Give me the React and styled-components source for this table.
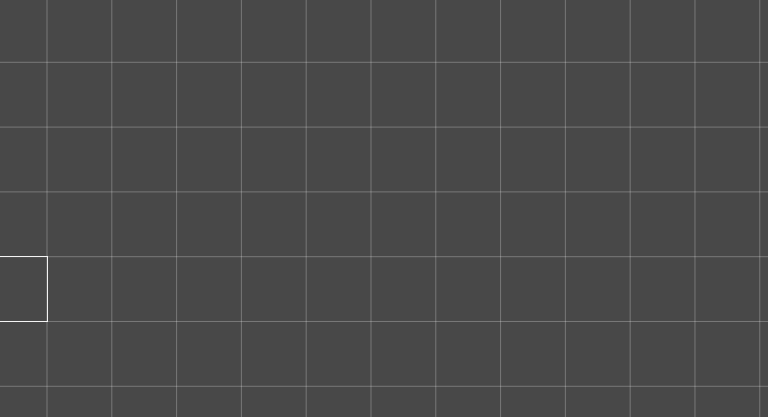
import React from "react";
import styled, { createGlobalStyle } from "styled-components";

const Global = createGlobalStyle`
  html, body { margin: 0; padding: 0; height: 100%; background: #484848; overflow: hidden; }
  #root { height: 100%; }
`;

const Canvas = styled.div`
  position: relative;
  width: 100vw;
  height: 100vh;
  background-color: #484848;
  background-image:
    linear-gradient(to right, rgba(255,255,255,0.26) 1px, transparent 1px),
    linear-gradient(to bottom, rgba(255,255,255,0.26) 1px, transparent 1px);
  background-size: 64.8px 64.8px;
  background-position: 46.5px 61.8px;
  overflow: hidden;
`;

const Selection = styled.div`
  position: absolute;
  left: ${(p) => p.$x}px;
  top: ${(p) => p.$y}px;
  width: ${(p) => p.$size}px;
  height: ${(p) => p.$size}px;
  box-sizing: border-box;
  border: 1.5px solid rgba(255,255,255,0.92);
`;

export default function App() {
  return (
    <>
      <Global />
      <Canvas>
        <Selection $x={-18} $y={255.6} $size={66} />
      </Canvas>
    </>
  );
}
